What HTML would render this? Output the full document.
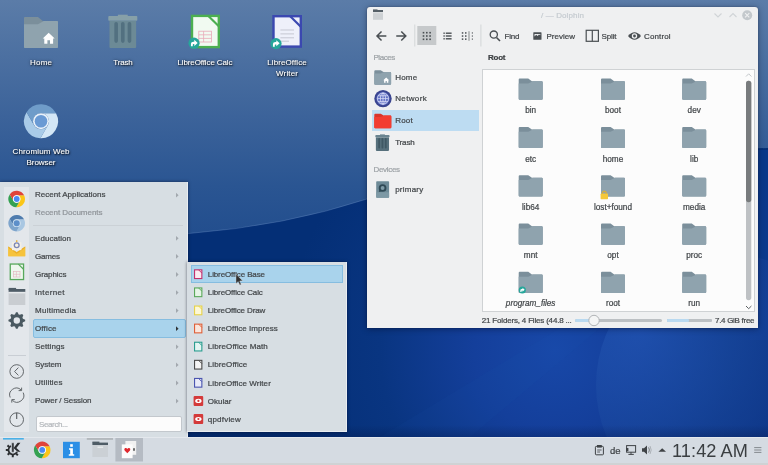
<!DOCTYPE html>
<html><head><meta charset="utf-8"><title>Desktop</title>
<style>
html,body{margin:0;padding:0;}
body{width:768px;height:465px;overflow:hidden;position:relative;font-family:"Liberation Sans",sans-serif;background:#0b2c7a;}
.t{position:absolute;white-space:nowrap;-webkit-text-stroke:0.22px currentColor;}
.dl{color:#fff;-webkit-text-stroke:0.1px #fff;text-shadow:0.8px 1px 1.6px rgba(0,0,0,.9),0 0 3px rgba(0,0,0,.55);}
#bg{position:absolute;left:0;top:0;}
#w{position:absolute;left:0;top:0;width:768px;height:465px;overflow:hidden;will-change:transform;filter:blur(0.35px);}
</style></head><body><div id="w">

<svg id="bg" width="768" height="465" viewBox="0 0 768 465">
<defs>
<linearGradient id="g1" x1="0" y1="0" x2="0" y2="1">
<stop offset="0" stop-color="#5b7ca8"/>
<stop offset="0.12" stop-color="#4c70a1"/>
<stop offset="0.25" stop-color="#3c639a"/>
<stop offset="0.40" stop-color="#2a5592"/>
<stop offset="0.55" stop-color="#1f4b8c"/>
<stop offset="0.75" stop-color="#163e86"/>
<stop offset="1" stop-color="#143382"/>
</linearGradient>
<radialGradient id="g2" cx="555" cy="350" r="270" gradientUnits="userSpaceOnUse">
<stop offset="0" stop-color="#1848a8"/>
<stop offset="0.3" stop-color="#143f9b"/>
<stop offset="0.65" stop-color="#093581"/>
<stop offset="1" stop-color="#042f76"/>
</radialGradient>
<radialGradient id="g3" cx="640" cy="330" r="190" gradientUnits="userSpaceOnUse">
<stop offset="0" stop-color="#2356b4"/>
<stop offset="0.5" stop-color="#1a48a0"/>
<stop offset="1" stop-color="#10368a"/>
</radialGradient>
<linearGradient id="g4" x1="0" y1="0" x2="0" y2="1">
<stop offset="0" stop-color="#000828" stop-opacity="0"/>
<stop offset="1" stop-color="#000828" stop-opacity="0.22"/>
</linearGradient>
</defs>
<rect width="768" height="465" fill="url(#g1)"/>
<path d="M0,248 Q60,240 189,233.5 Q285,226 367,199 Q600,152 768,148 V465 H0 Z" fill="url(#g2)"/>
<rect x="750" y="150" width="18" height="190" fill="#1446a8" opacity="0.4"/>
<path d="M0,248 Q60,240 189,233.5 Q285,226 367,199" fill="none" stroke="#8fb0e0" stroke-opacity="0.25" stroke-width="1"/>
<circle cx="727" cy="385" r="131" fill="url(#g3)" opacity="0.7"/>
<path d="M380,437 L560,328 L600,328 L470,437 Z" fill="#2a60c0" opacity="0.06"/>
<rect x="0" y="425" width="768" height="12" fill="url(#g4)"/>
</svg>

<svg style="position:absolute;left:0px;top:0px" width="768" height="180" viewBox="0 0 768 180"><path d="M25,17 H37.96 L42.835,20.875 H57 Q58,20.875 58,21.875 V47 Q58,48 57,48 H25 Q24,48 24,47 V18 Q24,17 25,17 Z" fill="#7b8f9b"/><path d="M24,24.13 H37.96 L43.835,20.875 H57 Q58,20.875 58,21.875 V47 Q58,48 57,48 H25 Q24,48 24,47 Z" fill="#8fa3ae"/><path d="M42.720000000000006,38.5 L48.7,32.78 L54.68,38.5 H53.120000000000005 V43.7 H50.0 V40.32 H47.400000000000006 V43.7 H44.28 V38.5 Z" fill="#fff"/><rect x="117.87" y="14.7" width="9.860000000000001" height="2.7888" fill="#87a0a8"/><rect x="108.3" y="16.0944" width="29" height="4.648000000000001" rx="0.8" fill="#87a0a8"/><path d="M109.46,20.7424 H136.14 V46.900000000000006 Q136.14,47.900000000000006 135.14,47.900000000000006 H110.46 Q109.46,47.900000000000006 109.46,46.900000000000006 Z" fill="#6c8a96"/><rect x="114.3175" y="22.003999999999998" width="3.625" height="20.916" rx="1.8125" fill="#527080"/><rect x="120.9875" y="22.003999999999998" width="3.625" height="20.916" rx="1.8125" fill="#527080"/><rect x="127.6575" y="22.003999999999998" width="3.625" height="20.916" rx="1.8125" fill="#527080"/><rect x="190.8" y="14.7" width="29.2" height="33.6" fill="#4caf50"/><rect x="193.20000000000002" y="17.099999999999998" width="24.4" height="28.8" fill="#f1faf1"/><path d="M208.392,15.899999999999999 L218.8,26.308" stroke="#4caf50" stroke-width="2.16"/><g stroke="#e9a9b8" stroke-width="0.8" fill="none"><rect x="198.8" y="31.2" width="12.6" height="10.8"/><path d="M198.8,34.8 H211.4 M198.8,38.4 H211.4 M203.6,31.2 V42"/></g><circle cx="194" cy="43.2" r="5.6" fill="#26a69a"/><path d="M190.94545454545454,46.25454545454546 V43.70909090909091 Q190.94545454545454,41.67272727272728 193.4909090909091,41.67272727272728 H194.30545454545455 V39.84 L197.66545454545454,42.89454545454546 L194.30545454545455,45.94909090909091 V44.014545454545456 H193.4909090909091 Q192.77818181818182,44.014545454545456 192.77818181818182,44.72727272727273 V46.25454545454546 Z" fill="#fff"/><rect x="272.3" y="15" width="29.7" height="32.8" fill="#3b48b0"/><rect x="274.7" y="17.4" width="24.9" height="27.999999999999996" fill="#eef0fa"/><path d="M290.222,16.2 L300.8,26.778" stroke="#3b48b0" stroke-width="2.16"/><g stroke="#c5c7d2" stroke-width="1"><path d="M280.4,30 H294 M280.4,33.9 H294 M280.4,37.8 H294 M280.4,41.2 H289"/></g><circle cx="276" cy="43.6" r="5.6" fill="#26a69a"/><path d="M272.94545454545454,46.654545454545456 V44.10909090909091 Q272.94545454545454,42.07272727272728 275.4909090909091,42.07272727272728 H276.30545454545455 V40.24 L279.66545454545457,43.29454545454546 L276.30545454545455,46.34909090909091 V44.414545454545454 H275.4909090909091 Q274.7781818181818,44.414545454545454 274.7781818181818,45.127272727272725 V46.654545454545456 Z" fill="#fff"/><path d="M41.00,113.21 L56.01,113.21 A17,17 0 0 1 40.42,138.19 L47.92,125.20 A7.99,7.99 0 0 0 41.00,113.21 Z" fill="#d4e7f6"/><path d="M47.92,125.20 L40.42,138.19 A17,17 0 0 1 26.58,112.20 L34.08,125.20 A7.99,7.99 0 0 0 47.92,125.20 Z" fill="#a9cbe8"/><path d="M34.08,125.20 L26.58,112.20 A17,17 0 0 1 56.01,113.21 L41.00,113.21 A7.99,7.99 0 0 0 34.08,125.20 Z" fill="#6f9cc9"/><circle cx="41" cy="121.2" r="7.99" fill="#e8f1fa"/><circle cx="41" cy="121.2" r="6.29" fill="#6a9ad4"/></svg>
<div class="t dl" style="left:30.00px;top:56.70px;font-size:8.0px;line-height:12px;color:#fff;letter-spacing:0.220px;">Home</div>
<div class="t dl" style="left:113.25px;top:56.70px;font-size:8.0px;line-height:12px;color:#fff;letter-spacing:-0.163px;">Trash</div>
<div class="t dl" style="left:177.50px;top:56.70px;font-size:8.0px;line-height:12px;color:#fff;letter-spacing:-0.118px;">LibreOffice Calc</div>
<div class="t dl" style="left:267.25px;top:56.70px;font-size:8.0px;line-height:12px;color:#fff;letter-spacing:0.096px;">LibreOffice</div>
<div class="t dl" style="left:276.00px;top:67.70px;font-size:8.0px;line-height:12px;color:#fff;letter-spacing:0.163px;">Writer</div>
<div class="t dl" style="left:12.50px;top:145.70px;font-size:8.0px;line-height:12px;color:#fff;letter-spacing:0.144px;">Chromium Web</div>
<div class="t dl" style="left:26.50px;top:157.20px;font-size:8.0px;line-height:12px;color:#fff;letter-spacing:-0.056px;">Browser</div>
<div style="position:absolute;left:367px;top:7px;width:391px;height:321px;background:#eff0f1;border-radius:3px 3px 0 0;box-shadow:0 1px 6px rgba(0,0,20,.38),0 0 1.5px rgba(0,0,20,.35);"></div>
<svg style="position:absolute;left:372px;top:9px" width="12" height="12" viewBox="0 0 12 12"><rect x="1" y="3" width="10" height="7.8" fill="#cdd1d4"/><rect x="1" y="1" width="10" height="2.2" fill="#566068"/><rect x="1" y="0.4" width="4.5" height="1.5" fill="#566068"/><rect x="1" y="3.2" width="10" height="1" fill="#e4e7e9"/></svg>
<div class="t " style="left:541.00px;top:9.70px;font-size:8.0px;line-height:12px;color:#c6ccd1;letter-spacing:0.120px;">/ — Dolphin</div>
<svg style="position:absolute;left:710px;top:8px" width="46" height="15" viewBox="0 0 46 15"><path d="M4.5,5.5 L8,9 L11.5,5.5" stroke="#d0d4d7" stroke-width="1.1" fill="none"/><path d="M19.5,9 L23,5.5 L26.5,9" stroke="#d0d4d7" stroke-width="1.1" fill="none"/><circle cx="37.2" cy="7.2" r="5" fill="#c3c8cc"/><path d="M35.1,5.1 L39.3,9.3 M39.3,5.1 L35.1,9.3" stroke="#eff0f1" stroke-width="1.1"/></svg>
<svg style="position:absolute;left:0px;top:0px" width="768" height="60" viewBox="0 0 768 60"><g stroke="#4a4f53" stroke-width="1.5" fill="none" stroke-linecap="square"><path d="M377.2,36 H385.6 M381,32 L377,36 L381,40"/><path d="M397,36 H405.6 M401.8,32 L405.8,36 L401.8,40"/></g><rect x="414.3" y="24.5" width="1" height="22" fill="#d3d6d8"/><rect x="480.4" y="24.5" width="1" height="22" fill="#d3d6d8"/><rect x="417.3" y="26" width="19" height="19" fill="#c6c9cb"/><rect x="422.70" y="31.90" width="1.6" height="1.6" fill="#4a4f53"/><rect x="422.70" y="35.20" width="1.6" height="1.6" fill="#4a4f53"/><rect x="422.70" y="38.50" width="1.6" height="1.6" fill="#4a4f53"/><rect x="426.00" y="31.90" width="1.6" height="1.6" fill="#4a4f53"/><rect x="426.00" y="35.20" width="1.6" height="1.6" fill="#4a4f53"/><rect x="426.00" y="38.50" width="1.6" height="1.6" fill="#4a4f53"/><rect x="429.30" y="31.90" width="1.6" height="1.6" fill="#4a4f53"/><rect x="429.30" y="35.20" width="1.6" height="1.6" fill="#4a4f53"/><rect x="429.30" y="38.50" width="1.6" height="1.6" fill="#4a4f53"/><rect x="443.4" y="32.50" width="1.4" height="1.4" fill="#4a4f53"/><rect x="445.8" y="32.50" width="5.8" height="1.4" fill="#4a4f53"/><rect x="443.4" y="35.30" width="1.4" height="1.4" fill="#4a4f53"/><rect x="445.8" y="35.30" width="5.8" height="1.4" fill="#4a4f53"/><rect x="443.4" y="38.10" width="1.4" height="1.4" fill="#4a4f53"/><rect x="445.8" y="38.10" width="5.8" height="1.4" fill="#4a4f53"/><rect x="461.8" y="32.20" width="1.5" height="1.5" fill="#4a4f53"/><rect x="465" y="32.20" width="1.5" height="1.5" fill="#4a4f53"/><rect x="471.8" y="32.20" width="1.2" height="1.5" fill="#4a4f53" opacity=".7"/><rect x="461.8" y="35.30" width="1.5" height="1.5" fill="#4a4f53"/><rect x="465" y="35.30" width="1.5" height="1.5" fill="#4a4f53"/><rect x="471.8" y="35.30" width="1.2" height="1.5" fill="#4a4f53" opacity=".7"/><rect x="461.8" y="38.40" width="1.5" height="1.5" fill="#4a4f53"/><rect x="465" y="38.40" width="1.5" height="1.5" fill="#4a4f53"/><rect x="471.8" y="38.40" width="1.2" height="1.5" fill="#4a4f53" opacity=".7"/><rect x="468.6" y="31.2" width="0.8" height="9.6" fill="#4a4f53" opacity=".8"/><circle cx="493.8" cy="34.6" r="3.6" stroke="#4a4f53" stroke-width="1.3" fill="none"/><path d="M496.5,37.4 L500,41" stroke="#4a4f53" stroke-width="1.5"/><rect x="533.3" y="32.2" width="8.2" height="7.6" rx="0.6" fill="#4a4f53"/><path d="M534.5,34 H540.3 V35.2 L539,34.6 L537.6,36 L536.2,34.8 L534.5,36.4 Z" fill="#eff0f1"/><rect x="586.2" y="30.3" width="12.2" height="11" stroke="#4a4f53" stroke-width="1.2" fill="none"/><path d="M592.3,30.3 V41.3" stroke="#4a4f53" stroke-width="1.2"/><path d="M628,36 Q634.5,28.5 641,36 Q634.5,43.5 628,36 Z" fill="#4a4f53"/><circle cx="634.5" cy="36" r="2.7" fill="#eff0f1"/><circle cx="634.5" cy="36" r="1.4" fill="#4a4f53"/></svg>
<div class="t " style="left:504.50px;top:30.70px;font-size:8.0px;line-height:12px;color:#43474a;letter-spacing:-0.187px;">Find</div>
<div class="t " style="left:546.50px;top:30.70px;font-size:8.0px;line-height:12px;color:#43474a;letter-spacing:0.008px;">Preview</div>
<div class="t " style="left:601.50px;top:30.70px;font-size:8.0px;line-height:12px;color:#43474a;letter-spacing:-0.141px;">Split</div>
<div class="t " style="left:644.00px;top:30.70px;font-size:8.0px;line-height:12px;color:#43474a;letter-spacing:0.135px;">Control</div>
<div class="t " style="left:373.50px;top:52.30px;font-size:8.0px;line-height:12px;color:#9ea3a7;letter-spacing:-0.462px;">Places</div>
<div class="t " style="left:373.50px;top:164.30px;font-size:8.0px;line-height:12px;color:#9ea3a7;letter-spacing:-0.325px;">Devices</div>
<div class="t " style="left:488.00px;top:52.30px;font-size:8.0px;line-height:12px;color:#3d4144;letter-spacing:-0.238px;font-weight:bold;">Root</div>
<div style="position:absolute;left:371.5px;top:110px;width:107px;height:21px;background:#bddcf2;"></div>
<svg style="position:absolute;left:0px;top:0px" width="768" height="210" viewBox="0 0 768 210"><path d="M375.3,70.2 H380.692 L383.5045,72.0125 H390.1 Q391.1,72.0125 391.1,73.0125 V83.7 Q391.1,84.7 390.1,84.7 H375.3 Q374.3,84.7 374.3,83.7 V71.2 Q374.3,70.2 375.3,70.2 Z" fill="#7b8f9b"/><path d="M374.3,73.535 H380.692 L384.5045,72.0125 H390.1 Q391.1,72.0125 391.1,73.0125 V83.7 Q391.1,84.7 390.1,84.7 H375.3 Q374.3,84.7 374.3,83.7 Z" fill="#8fa3ae"/><path d="M383.325,80.2 L386.2,77.45 L389.075,80.2 H388.325 V82.7 H386.825 V81.075 H385.575 V82.7 H384.075 V80.2 Z" fill="#fff"/><circle cx="383" cy="98.6" r="8.7" fill="#3a4590"/><circle cx="383" cy="98.6" r="6.6" fill="#5f6fc4"/><g stroke="#e6e9fa" stroke-width="0.7" fill="none"><circle cx="383" cy="98.6" r="5.6"/><ellipse cx="383" cy="98.6" rx="2.6" ry="5.6"/><path d="M377.4,98.6 H388.6 M383,93 V104.2 M378.2,95.8 H387.8 M378.2,101.4 H387.8"/></g><path d="M375.3,113.7 H380.78000000000003 L383.59250000000003,115.5125 H390.3 Q391.3,115.5125 391.3,116.5125 V127.19999999999999 Q391.3,128.2 390.3,128.2 H375.3 Q374.3,128.2 374.3,127.19999999999999 V114.7 Q374.3,113.7 375.3,113.7 Z" fill="#d9352b"/><path d="M374.3,117.035 H380.78000000000003 L384.59250000000003,115.5125 H390.3 Q391.3,115.5125 391.3,116.5125 V127.19999999999999 Q391.3,128.2 390.3,128.2 H375.3 Q374.3,128.2 374.3,127.19999999999999 Z" fill="#f23c31"/><rect x="380.019" y="134.4" width="4.862000000000001" height="1.3944" fill="#6a8490"/><rect x="375.3" y="135.09720000000002" width="14.3" height="2.3240000000000003" rx="0.8" fill="#6a8490"/><path d="M375.872,137.4212 H389.028 V150.0 Q389.028,151.0 388.028,151.0 H376.872 Q375.872,151.0 375.872,150.0 Z" fill="#56707c"/><rect x="378.26725" y="138.052" width="1.7875" height="10.458" rx="0.89375" fill="#3f5864"/><rect x="381.55625" y="138.052" width="1.7875" height="10.458" rx="0.89375" fill="#3f5864"/><rect x="384.84525" y="138.052" width="1.7875" height="10.458" rx="0.89375" fill="#3f5864"/><rect x="376.2" y="181.2" width="12.9" height="16.6" rx="0.8" fill="#6d8a97"/><rect x="376.2" y="192.3" width="12.9" height="5.5" rx="0.8" fill="#7d99a5"/><circle cx="382.6" cy="188" r="2.9" fill="#7f9ba7" stroke="#2f4955" stroke-width="1.9"/><path d="M379.6,189.5 L378.8,192 L381.6,191.3 Z" fill="#2f4955"/></svg>
<div class="t " style="left:395.20px;top:71.60px;font-size:8.0px;line-height:12px;color:#43474a;letter-spacing:0.220px;">Home</div>
<div class="t " style="left:395.20px;top:92.60px;font-size:8.0px;line-height:12px;color:#43474a;letter-spacing:0.360px;">Network</div>
<div class="t " style="left:395.20px;top:114.60px;font-size:8.0px;line-height:12px;color:#43474a;letter-spacing:0.201px;">Root</div>
<div class="t " style="left:395.20px;top:136.60px;font-size:8.0px;line-height:12px;color:#43474a;letter-spacing:-0.163px;">Trash</div>
<div class="t " style="left:395.20px;top:183.60px;font-size:8.0px;line-height:12px;color:#43474a;letter-spacing:0.222px;">primary</div>
<div style="position:absolute;left:482px;top:68.5px;width:272.5px;height:243.5px;background:#fcfcfc;border:1px solid #cfd2d4;box-sizing:border-box;"></div>
<div class="t " style="left:525.23px;top:104.60px;font-size:8.2px;line-height:12px;color:#43474a;">bin</div>
<div class="t " style="left:605.02px;top:104.60px;font-size:8.2px;line-height:12px;color:#43474a;">boot</div>
<div class="t " style="left:687.59px;top:104.60px;font-size:8.2px;line-height:12px;color:#43474a;">dev</div>
<div class="t " style="left:525.23px;top:153.60px;font-size:8.2px;line-height:12px;color:#43474a;">etc</div>
<div class="t " style="left:602.74px;top:153.60px;font-size:8.2px;line-height:12px;color:#43474a;">home</div>
<div class="t " style="left:690.10px;top:153.60px;font-size:8.2px;line-height:12px;color:#43474a;">lib</div>
<div class="t " style="left:522.04px;top:201.60px;font-size:8.2px;line-height:12px;color:#43474a;">lib64</div>
<div class="t " style="left:593.97px;top:201.60px;font-size:8.2px;line-height:12px;color:#43474a;">lost+found</div>
<div class="t " style="left:683.03px;top:201.60px;font-size:8.2px;line-height:12px;color:#43474a;">media</div>
<div class="t " style="left:523.87px;top:249.60px;font-size:8.2px;line-height:12px;color:#43474a;">mnt</div>
<div class="t " style="left:607.30px;top:249.60px;font-size:8.2px;line-height:12px;color:#43474a;">opt</div>
<div class="t " style="left:686.22px;top:249.60px;font-size:8.2px;line-height:12px;color:#43474a;">proc</div>
<div class="t " style="left:505.86px;top:297.60px;font-size:8.2px;line-height:12px;color:#43474a;font-style:italic;">program_files</div>
<div class="t " style="left:605.94px;top:297.60px;font-size:8.2px;line-height:12px;color:#43474a;">root</div>
<div class="t " style="left:688.27px;top:297.60px;font-size:8.2px;line-height:12px;color:#43474a;">run</div>
<svg style="position:absolute;left:0px;top:0px" width="768" height="330" viewBox="0 0 768 330"><path d="M519.7,78.6 H528.26 L531.91,81.25 H541.7 Q542.7,81.25 542.7,82.25 V98.8 Q542.7,99.8 541.7,99.8 H519.7 Q518.7,99.8 518.7,98.8 V79.6 Q518.7,78.6 519.7,78.6 Z" fill="#7b8f9b"/><path d="M518.7,83.476 H528.26 L532.91,81.25 H541.7 Q542.7,81.25 542.7,82.25 V98.8 Q542.7,99.8 541.7,99.8 H519.7 Q518.7,99.8 518.7,98.8 Z" fill="#8fa3ae"/><path d="M602,78.6 H610.56 L614.2099999999999,81.25 H624 Q625,81.25 625,82.25 V98.8 Q625,99.8 624,99.8 H602 Q601,99.8 601,98.8 V79.6 Q601,78.6 602,78.6 Z" fill="#7b8f9b"/><path d="M601,83.476 H610.56 L615.2099999999999,81.25 H624 Q625,81.25 625,82.25 V98.8 Q625,99.8 624,99.8 H602 Q601,99.8 601,98.8 Z" fill="#8fa3ae"/><path d="M683.2,78.6 H691.76 L695.41,81.25 H705.2 Q706.2,81.25 706.2,82.25 V98.8 Q706.2,99.8 705.2,99.8 H683.2 Q682.2,99.8 682.2,98.8 V79.6 Q682.2,78.6 683.2,78.6 Z" fill="#7b8f9b"/><path d="M682.2,83.476 H691.76 L696.41,81.25 H705.2 Q706.2,81.25 706.2,82.25 V98.8 Q706.2,99.8 705.2,99.8 H683.2 Q682.2,99.8 682.2,98.8 Z" fill="#8fa3ae"/><path d="M519.7,126.89999999999999 H528.26 L531.91,129.54999999999998 H541.7 Q542.7,129.54999999999998 542.7,130.54999999999998 V147.1 Q542.7,148.1 541.7,148.1 H519.7 Q518.7,148.1 518.7,147.1 V127.89999999999999 Q518.7,126.89999999999999 519.7,126.89999999999999 Z" fill="#7b8f9b"/><path d="M518.7,131.77599999999998 H528.26 L532.91,129.54999999999998 H541.7 Q542.7,129.54999999999998 542.7,130.54999999999998 V147.1 Q542.7,148.1 541.7,148.1 H519.7 Q518.7,148.1 518.7,147.1 Z" fill="#8fa3ae"/><path d="M602,126.89999999999999 H610.56 L614.2099999999999,129.54999999999998 H624 Q625,129.54999999999998 625,130.54999999999998 V147.1 Q625,148.1 624,148.1 H602 Q601,148.1 601,147.1 V127.89999999999999 Q601,126.89999999999999 602,126.89999999999999 Z" fill="#7b8f9b"/><path d="M601,131.77599999999998 H610.56 L615.2099999999999,129.54999999999998 H624 Q625,129.54999999999998 625,130.54999999999998 V147.1 Q625,148.1 624,148.1 H602 Q601,148.1 601,147.1 Z" fill="#8fa3ae"/><path d="M683.2,126.89999999999999 H691.76 L695.41,129.54999999999998 H705.2 Q706.2,129.54999999999998 706.2,130.54999999999998 V147.1 Q706.2,148.1 705.2,148.1 H683.2 Q682.2,148.1 682.2,147.1 V127.89999999999999 Q682.2,126.89999999999999 683.2,126.89999999999999 Z" fill="#7b8f9b"/><path d="M682.2,131.77599999999998 H691.76 L696.41,129.54999999999998 H705.2 Q706.2,129.54999999999998 706.2,130.54999999999998 V147.1 Q706.2,148.1 705.2,148.1 H683.2 Q682.2,148.1 682.2,147.1 Z" fill="#8fa3ae"/><path d="M519.7,175.2 H528.26 L531.91,177.85 H541.7 Q542.7,177.85 542.7,178.85 V195.39999999999998 Q542.7,196.39999999999998 541.7,196.39999999999998 H519.7 Q518.7,196.39999999999998 518.7,195.39999999999998 V176.2 Q518.7,175.2 519.7,175.2 Z" fill="#7b8f9b"/><path d="M518.7,180.076 H528.26 L532.91,177.85 H541.7 Q542.7,177.85 542.7,178.85 V195.39999999999998 Q542.7,196.39999999999998 541.7,196.39999999999998 H519.7 Q518.7,196.39999999999998 518.7,195.39999999999998 Z" fill="#8fa3ae"/><path d="M602,175.2 H610.56 L614.2099999999999,177.85 H624 Q625,177.85 625,178.85 V195.39999999999998 Q625,196.39999999999998 624,196.39999999999998 H602 Q601,196.39999999999998 601,195.39999999999998 V176.2 Q601,175.2 602,175.2 Z" fill="#7b8f9b"/><path d="M601,180.076 H610.56 L615.2099999999999,177.85 H624 Q625,177.85 625,178.85 V195.39999999999998 Q625,196.39999999999998 624,196.39999999999998 H602 Q601,196.39999999999998 601,195.39999999999998 Z" fill="#8fa3ae"/><path d="M683.2,175.2 H691.76 L695.41,177.85 H705.2 Q706.2,177.85 706.2,178.85 V195.39999999999998 Q706.2,196.39999999999998 705.2,196.39999999999998 H683.2 Q682.2,196.39999999999998 682.2,195.39999999999998 V176.2 Q682.2,175.2 683.2,175.2 Z" fill="#7b8f9b"/><path d="M682.2,180.076 H691.76 L696.41,177.85 H705.2 Q706.2,177.85 706.2,178.85 V195.39999999999998 Q706.2,196.39999999999998 705.2,196.39999999999998 H683.2 Q682.2,196.39999999999998 682.2,195.39999999999998 Z" fill="#8fa3ae"/><path d="M519.7,223.49999999999997 H528.26 L531.91,226.14999999999998 H541.7 Q542.7,226.14999999999998 542.7,227.14999999999998 V243.69999999999996 Q542.7,244.69999999999996 541.7,244.69999999999996 H519.7 Q518.7,244.69999999999996 518.7,243.69999999999996 V224.49999999999997 Q518.7,223.49999999999997 519.7,223.49999999999997 Z" fill="#7b8f9b"/><path d="M518.7,228.37599999999998 H528.26 L532.91,226.14999999999998 H541.7 Q542.7,226.14999999999998 542.7,227.14999999999998 V243.69999999999996 Q542.7,244.69999999999996 541.7,244.69999999999996 H519.7 Q518.7,244.69999999999996 518.7,243.69999999999996 Z" fill="#8fa3ae"/><path d="M602,223.49999999999997 H610.56 L614.2099999999999,226.14999999999998 H624 Q625,226.14999999999998 625,227.14999999999998 V243.69999999999996 Q625,244.69999999999996 624,244.69999999999996 H602 Q601,244.69999999999996 601,243.69999999999996 V224.49999999999997 Q601,223.49999999999997 602,223.49999999999997 Z" fill="#7b8f9b"/><path d="M601,228.37599999999998 H610.56 L615.2099999999999,226.14999999999998 H624 Q625,226.14999999999998 625,227.14999999999998 V243.69999999999996 Q625,244.69999999999996 624,244.69999999999996 H602 Q601,244.69999999999996 601,243.69999999999996 Z" fill="#8fa3ae"/><path d="M683.2,223.49999999999997 H691.76 L695.41,226.14999999999998 H705.2 Q706.2,226.14999999999998 706.2,227.14999999999998 V243.69999999999996 Q706.2,244.69999999999996 705.2,244.69999999999996 H683.2 Q682.2,244.69999999999996 682.2,243.69999999999996 V224.49999999999997 Q682.2,223.49999999999997 683.2,223.49999999999997 Z" fill="#7b8f9b"/><path d="M682.2,228.37599999999998 H691.76 L696.41,226.14999999999998 H705.2 Q706.2,226.14999999999998 706.2,227.14999999999998 V243.69999999999996 Q706.2,244.69999999999996 705.2,244.69999999999996 H683.2 Q682.2,244.69999999999996 682.2,243.69999999999996 Z" fill="#8fa3ae"/><path d="M519.7,271.79999999999995 H528.26 L531.91,274.44999999999993 H541.7 Q542.7,274.44999999999993 542.7,275.44999999999993 V291.99999999999994 Q542.7,292.99999999999994 541.7,292.99999999999994 H519.7 Q518.7,292.99999999999994 518.7,291.99999999999994 V272.79999999999995 Q518.7,271.79999999999995 519.7,271.79999999999995 Z" fill="#7b8f9b"/><path d="M518.7,276.67599999999993 H528.26 L532.91,274.44999999999993 H541.7 Q542.7,274.44999999999993 542.7,275.44999999999993 V291.99999999999994 Q542.7,292.99999999999994 541.7,292.99999999999994 H519.7 Q518.7,292.99999999999994 518.7,291.99999999999994 Z" fill="#8fa3ae"/><path d="M602,271.79999999999995 H610.56 L614.2099999999999,274.44999999999993 H624 Q625,274.44999999999993 625,275.44999999999993 V291.99999999999994 Q625,292.99999999999994 624,292.99999999999994 H602 Q601,292.99999999999994 601,291.99999999999994 V272.79999999999995 Q601,271.79999999999995 602,271.79999999999995 Z" fill="#7b8f9b"/><path d="M601,276.67599999999993 H610.56 L615.2099999999999,274.44999999999993 H624 Q625,274.44999999999993 625,275.44999999999993 V291.99999999999994 Q625,292.99999999999994 624,292.99999999999994 H602 Q601,292.99999999999994 601,291.99999999999994 Z" fill="#8fa3ae"/><path d="M683.2,271.79999999999995 H691.76 L695.41,274.44999999999993 H705.2 Q706.2,274.44999999999993 706.2,275.44999999999993 V291.99999999999994 Q706.2,292.99999999999994 705.2,292.99999999999994 H683.2 Q682.2,292.99999999999994 682.2,291.99999999999994 V272.79999999999995 Q682.2,271.79999999999995 683.2,271.79999999999995 Z" fill="#7b8f9b"/><path d="M682.2,276.67599999999993 H691.76 L696.41,274.44999999999993 H705.2 Q706.2,274.44999999999993 706.2,275.44999999999993 V291.99999999999994 Q706.2,292.99999999999994 705.2,292.99999999999994 H683.2 Q682.2,292.99999999999994 682.2,291.99999999999994 Z" fill="#8fa3ae"/><rect x="600.6" y="193.6" width="7.4" height="5.6" rx="0.6" fill="#f5c83a"/><path d="M602.4,193.79999999999998 V192.39999999999998 Q604.3,189.79999999999998 606.2,192.39999999999998 V193.79999999999998" stroke="#e0b030" stroke-width="1.1" fill="none"/><circle cx="522.3" cy="289.99999999999994" r="3.6" fill="#26a69a"/><path d="M520.3363636363636,291.9636363636363 V290.32727272727266 Q520.3363636363636,289.01818181818174 521.9727272727272,289.01818181818174 H522.4963636363636 V287.8399999999999 L524.6563636363636,289.8036363636363 L522.4963636363636,291.76727272727265 V290.5236363636363 H521.9727272727272 Q521.5145454545454,290.5236363636363 521.5145454545454,290.98181818181814 V291.9636363636363 Z" fill="#fff"/><rect x="746" y="80.8" width="5.3" height="219.4" rx="2.6" fill="#bec1c4"/><rect x="746" y="80.8" width="5.3" height="121.4" rx="2.6" fill="#787b7d"/><path d="M746,76.5 L748.7,73.8 L751.4,76.5" stroke="#c3c7ca" stroke-width="1" fill="none"/><path d="M746,306 L748.7,308.7 L751.4,306" stroke="#5b5f62" stroke-width="1" fill="none"/><rect x="575" y="319" width="87" height="3" rx="1.5" fill="#bcc0c3"/><rect x="575" y="319" width="19" height="3" rx="1.5" fill="#b9d9f0"/><circle cx="594" cy="320.5" r="5.2" fill="#f4f5f5" stroke="#a9adb0" stroke-width="0.9"/><rect x="667" y="319" width="45" height="3" rx="1" fill="#bcc0c3"/><rect x="667" y="319" width="22" height="3" rx="1" fill="#b9d9f0"/></svg>
<div class="t " style="left:481.80px;top:315.20px;font-size:8.0px;line-height:12px;color:#43474a;letter-spacing:-0.184px;">21 Folders, 4 Files (44.8 ...</div>
<div class="t " style="left:715.00px;top:315.20px;font-size:8.0px;line-height:12px;color:#43474a;letter-spacing:-0.290px;">7.4 GiB free</div>
<div style="position:absolute;left:0px;top:181.8px;width:188.4px;height:255px;background:#d7dee3;box-shadow:0 0 3px rgba(0,0,20,.55);border-right:1px solid #e9edf1;box-sizing:border-box;"></div>
<div style="position:absolute;left:4.4px;top:186.5px;width:24.2px;height:245px;background:#e3e7eb;"></div>
<div style="position:absolute;left:33px;top:224.8px;width:150px;height:1px;background:#cbd1d6;"></div>
<div style="position:absolute;left:8px;top:354.5px;width:18px;height:1px;background:#c9ced4;"></div>
<div style="position:absolute;left:32.5px;top:319px;width:153px;height:19.2px;background:#a9d3ec;border:1px solid #86bde0;box-sizing:border-box;border-radius:2px;"></div>
<div class="t " style="left:35.00px;top:188.60px;font-size:8.0px;line-height:12px;color:#43474a;letter-spacing:0.013px;">Recent Applications</div>
<div class="t " style="left:35.00px;top:206.60px;font-size:8.0px;line-height:12px;color:#90959a;letter-spacing:-0.035px;">Recent Documents</div>
<div class="t " style="left:35.00px;top:232.60px;font-size:8.0px;line-height:12px;color:#43474a;letter-spacing:0.053px;">Education</div>
<div class="t " style="left:35.00px;top:250.60px;font-size:8.0px;line-height:12px;color:#43474a;letter-spacing:-0.196px;">Games</div>
<div class="t " style="left:35.00px;top:268.60px;font-size:8.0px;line-height:12px;color:#43474a;letter-spacing:-0.073px;">Graphics</div>
<div class="t " style="left:35.00px;top:286.60px;font-size:8.0px;line-height:12px;color:#43474a;letter-spacing:0.339px;">Internet</div>
<div class="t " style="left:35.00px;top:304.60px;font-size:8.0px;line-height:12px;color:#43474a;letter-spacing:0.258px;">Multimedia</div>
<div class="t " style="left:35.00px;top:322.60px;font-size:8.0px;line-height:12px;color:#43474a;letter-spacing:0.150px;">Office</div>
<div class="t " style="left:35.00px;top:340.60px;font-size:8.0px;line-height:12px;color:#43474a;letter-spacing:0.085px;">Settings</div>
<div class="t " style="left:35.00px;top:358.60px;font-size:8.0px;line-height:12px;color:#43474a;letter-spacing:-0.034px;">System</div>
<div class="t " style="left:35.00px;top:376.60px;font-size:8.0px;line-height:12px;color:#43474a;letter-spacing:0.215px;">Utilities</div>
<div class="t " style="left:35.00px;top:394.60px;font-size:8.0px;line-height:12px;color:#43474a;letter-spacing:-0.093px;">Power / Session</div>
<div style="position:absolute;left:35.5px;top:416px;width:146px;height:15.5px;background:#fcfcfc;border:1px solid #c3c8cd;box-sizing:border-box;border-radius:2px;"></div>
<div class="t " style="left:39.00px;top:418.70px;font-size:8.0px;line-height:12px;color:#b4b8bc;letter-spacing:-0.377px;">Search...</div>
<svg style="position:absolute;left:0px;top:0px" width="768" height="436" viewBox="0 0 768 436"><path d="M176,192.79999999999998 L178.6,195.2 L176,197.6 Z" fill="#a2a8ae"/><path d="M176,235.9 L178.6,238.3 L176,240.70000000000002 Z" fill="#a2a8ae"/><path d="M176,253.99999999999997 L178.6,256.4 L176,258.79999999999995 Z" fill="#a2a8ae"/><path d="M176,272.1 L178.6,274.5 L176,276.9 Z" fill="#a2a8ae"/><path d="M176,290.20000000000005 L178.6,292.6 L176,295.0 Z" fill="#a2a8ae"/><path d="M176,308.20000000000005 L178.6,310.6 L176,313.0 Z" fill="#a2a8ae"/><path d="M176,326.3 L178.6,328.7 L176,331.09999999999997 Z" fill="#2f3336"/><path d="M176,344.40000000000003 L178.6,346.8 L176,349.2 Z" fill="#a2a8ae"/><path d="M176,362.5 L178.6,364.9 L176,367.29999999999995 Z" fill="#a2a8ae"/><path d="M176,380.6 L178.6,383 L176,385.4 Z" fill="#a2a8ae"/><path d="M176,398.70000000000005 L178.6,401.1 L176,403.5 Z" fill="#a2a8ae"/><path d="M16.70,195.26 L24.11,195.26 A8.3,8.3 0 0 1 16.23,207.29 L19.93,200.87 A3.74,3.74 0 0 0 16.70,195.26 Z" fill="#fbc618"/><path d="M19.93,200.87 L16.23,207.29 A8.3,8.3 0 0 1 9.76,194.45 L13.47,200.87 A3.74,3.74 0 0 0 19.93,200.87 Z" fill="#34a152"/><path d="M13.47,200.87 L9.76,194.45 A8.3,8.3 0 0 1 24.11,195.26 L16.70,195.26 A3.74,3.74 0 0 0 13.47,200.87 Z" fill="#e0443a"/><circle cx="16.7" cy="199" r="3.74" fill="#fff"/><circle cx="16.7" cy="199" r="2.91" fill="#4a8af4"/><path d="M16.70,219.30 L24.03,219.30 A8.3,8.3 0 0 1 16.42,231.50 L20.08,225.15 A3.90,3.90 0 0 0 16.70,219.30 Z" fill="#a9c7e2"/><path d="M20.08,225.15 L16.42,231.50 A8.3,8.3 0 0 1 9.66,218.81 L13.32,225.15 A3.90,3.90 0 0 0 20.08,225.15 Z" fill="#7ea5cc"/><path d="M13.32,225.15 L9.66,218.81 A8.3,8.3 0 0 1 24.03,219.30 L16.70,219.30 A3.90,3.90 0 0 0 13.32,225.15 Z" fill="#4f7cae"/><circle cx="16.7" cy="223.2" r="3.90" fill="#c5daee"/><circle cx="16.7" cy="223.2" r="2.99" fill="#5d8fc9"/><path d="M8.3,246.5 L16.7,252 L25.2,246.5 V256.3 H8.3 Z" fill="#f6c33c"/><path d="M8.3,246.5 L16.7,252.6 L25.2,246.5 V248 L16.7,254 L8.3,248 Z" fill="#e9ae2a"/><rect x="12" y="242.2" width="9.4" height="8" fill="#f4f0e6"/><circle cx="16.7" cy="245.2" r="2.4" fill="none" stroke="#7b86b5" stroke-width="1.3"/><rect x="16" y="240.3" width="1.4" height="1.6" fill="#e9ae2a"/><path d="M8.3,248 L16.7,254 L25.2,248 V256.3 H8.3 Z" fill="#f6c33c"/><rect x="9.6" y="263.4" width="14.6" height="16.8" fill="#58a85c"/><rect x="10.9" y="264.7" width="12.0" height="14.200000000000001" fill="#eef7ee"/><path d="M18.325999999999997,264.04999999999995 L23.55,269.274" stroke="#58a85c" stroke-width="1.1700000000000002"/><g stroke="#e4b0bc" stroke-width="0.6" fill="none"><rect x="13.4" y="271.6" width="6.6" height="5.4"/><path d="M13.4,274.3 H20 M16.4,271.6 V277"/></g><rect x="8.6" y="291.5" width="16.7" height="13.5" fill="#c9cdd1"/><rect x="8.6" y="289" width="16.7" height="2.8" fill="#4f5d67"/><rect x="8.6" y="287.9" width="7.5" height="2" fill="#4f5d67"/><rect x="8.6" y="292" width="16.7" height="1.4" fill="#e6e9eb"/><path d="M25.16,319.68 L25.16,321.32 L22.92,322.36 L22.44,323.52 L23.29,325.83 L22.13,326.99 L19.82,326.14 L18.66,326.62 L17.62,328.86 L15.98,328.86 L14.94,326.62 L13.78,326.14 L11.47,326.99 L10.31,325.83 L11.16,323.52 L10.68,322.36 L8.44,321.32 L8.44,319.68 L10.68,318.64 L11.16,317.48 L10.31,315.17 L11.47,314.01 L13.78,314.86 L14.94,314.38 L15.98,312.14 L17.62,312.14 L18.66,314.38 L19.82,314.86 L22.13,314.01 L23.29,315.17 L22.44,317.48 L22.92,318.64 Z M20.0,320.5 A3.2,3.2 0 1 0 13.600000000000001,320.5 A3.2,3.2 0 1 0 20.0,320.5 Z" fill="#4a5961" fill-rule="evenodd"/><circle cx="16.7" cy="371.5" r="6.8" fill="none" stroke="#55595c" stroke-width="0.9"/><path d="M18.4,367.6 L14.6,371.5 L18.4,375.4" fill="none" stroke="#55595c" stroke-width="0.9"/><path d="M10.2,397.5 A6.8,6.8 0 0 1 21,389.8 M23.2,392.6 A6.8,6.8 0 0 1 12.4,400.4" fill="none" stroke="#55595c" stroke-width="0.9"/><path d="M21.6,387.6 V390.6 H18.6 M11.8,402.6 V399.6 H14.8" fill="none" stroke="#55595c" stroke-width="0.9"/><circle cx="16.7" cy="419.6" r="6.8" fill="none" stroke="#55595c" stroke-width="0.9"/><path d="M16.7,412.8 V419" stroke="#55595c" stroke-width="1.1"/></svg>
<div style="position:absolute;left:187.2px;top:261.5px;width:159.8px;height:170.1px;background:#d7dee3;box-shadow:0 0 3px rgba(0,0,20,.55);border-right:1px solid #e9edf1;border-bottom:1px solid #e9edf1;box-sizing:border-box;"></div>
<div style="position:absolute;left:191.2px;top:265.3px;width:152px;height:17.5px;background:#a9d3ec;border:1px solid #86bde0;box-sizing:border-box;"></div>
<div class="t " style="left:207.80px;top:268.60px;font-size:8.0px;line-height:12px;color:#43474a;letter-spacing:-0.119px;">LibreOffice Base</div>
<div class="t " style="left:207.80px;top:286.60px;font-size:8.0px;line-height:12px;color:#43474a;letter-spacing:-0.118px;">LibreOffice Calc</div>
<div class="t " style="left:207.80px;top:304.60px;font-size:8.0px;line-height:12px;color:#43474a;letter-spacing:-0.128px;">LibreOffice Draw</div>
<div class="t " style="left:207.80px;top:322.60px;font-size:8.0px;line-height:12px;color:#43474a;letter-spacing:0.044px;">LibreOffice Impress</div>
<div class="t " style="left:207.80px;top:340.60px;font-size:8.0px;line-height:12px;color:#43474a;letter-spacing:0.097px;">LibreOffice Math</div>
<div class="t " style="left:207.80px;top:358.60px;font-size:8.0px;line-height:12px;color:#43474a;letter-spacing:0.096px;">LibreOffice</div>
<div class="t " style="left:207.80px;top:377.60px;font-size:8.0px;line-height:12px;color:#43474a;letter-spacing:0.062px;">LibreOffice Writer</div>
<div class="t " style="left:207.80px;top:395.60px;font-size:8.0px;line-height:12px;color:#43474a;letter-spacing:-0.012px;">Okular</div>
<div class="t " style="left:207.80px;top:413.60px;font-size:8.0px;line-height:12px;color:#43474a;letter-spacing:0.204px;">qpdfview</div>
<svg style="position:absolute;left:0px;top:0px" width="768" height="436" viewBox="0 0 768 436"><rect x="194" y="269.3" width="8.4" height="9.8" fill="#c2306e"/><rect x="195.1" y="270.40000000000003" width="6.2" height="7.6000000000000005" fill="#fbe9f0"/><path d="M198.63,269.85 L201.85,273.07" stroke="#c2306e" stroke-width="0.9900000000000001"/><rect x="194" y="287.40000000000003" width="8.4" height="9.8" fill="#5aa85a"/><rect x="195.1" y="288.50000000000006" width="6.2" height="7.6000000000000005" fill="#e6f4e6"/><path d="M198.63,287.95000000000005 L201.85,291.17" stroke="#5aa85a" stroke-width="0.9900000000000001"/><rect x="194" y="305.5" width="8.4" height="9.8" fill="#e6d24a"/><rect x="195.1" y="306.6" width="6.2" height="7.6000000000000005" fill="#fdf8d6"/><path d="M198.63,306.05 L201.85,309.27" stroke="#e6d24a" stroke-width="0.9900000000000001"/><rect x="194" y="323.6" width="8.4" height="9.8" fill="#df5f38"/><rect x="195.1" y="324.70000000000005" width="6.2" height="7.6000000000000005" fill="#fbe6dc"/><path d="M198.63,324.15000000000003 L201.85,327.37" stroke="#df5f38" stroke-width="0.9900000000000001"/><rect x="194" y="341.70000000000005" width="8.4" height="9.8" fill="#2a9d8f"/><rect x="195.1" y="342.80000000000007" width="6.2" height="7.6000000000000005" fill="#e4f5f2"/><path d="M198.63,342.25000000000006 L201.85,345.47" stroke="#2a9d8f" stroke-width="0.9900000000000001"/><rect x="194" y="359.8" width="8.4" height="9.8" fill="#4a4a4a"/><rect x="195.1" y="360.90000000000003" width="6.2" height="7.6000000000000005" fill="#f4f4f4"/><path d="M198.63,360.35 L201.85,363.57" stroke="#4a4a4a" stroke-width="0.9900000000000001"/><rect x="194" y="377.90000000000003" width="8.4" height="9.8" fill="#4a55b0"/><rect x="195.1" y="379.00000000000006" width="6.2" height="7.6000000000000005" fill="#e8eaf8"/><path d="M198.63,378.45000000000005 L201.85,381.67" stroke="#4a55b0" stroke-width="0.9900000000000001"/><rect x="193.6" y="395.9" width="9.6" height="10" rx="1" fill="#d43a3a"/><ellipse cx="198.4" cy="400.9" rx="3.2" ry="2.1" fill="#fff"/><circle cx="198.4" cy="400.9" r="1.1" fill="#d43a3a"/><rect x="193.6" y="414.0" width="9.6" height="10" rx="1" fill="#d43a3a"/><ellipse cx="198.4" cy="419.0" rx="3.2" ry="2.1" fill="#fff"/><circle cx="198.4" cy="419.0" r="1.1" fill="#d43a3a"/><path d="M236,274.2 V283.6 L238.2,281.6 L239.8,285 L241.2,284.4 L239.7,281 L242.6,280.8 Z" fill="#303030" stroke="#d8d8d8" stroke-width="0.4"/></svg>
<div style="position:absolute;left:0px;top:436.6px;width:768px;height:28.4px;background:#d5dbe2;border-top:1px solid #e4e8ed;box-sizing:border-box;"></div>
<div style="position:absolute;left:0px;top:463px;width:768px;height:2px;background:#cfd2d4;"></div>
<svg style="position:absolute;left:0px;top:436px" width="768" height="29" viewBox="0 436 768 29"><rect x="3" y="438" width="20.8" height="1.6" fill="#4ab0e6"/><path d="M11.10,445.92 A4.5,4.5 0 1 0 17.08,451.90" fill="none" stroke="#2b2e31" stroke-width="1.7"/><path d="M9.32,446.91 L7.48,445.37" stroke="#2b2e31" stroke-width="2"/><path d="M8.20,450.00 L5.80,450.00" stroke="#2b2e31" stroke-width="2"/><path d="M9.43,453.21 L7.65,454.82" stroke="#2b2e31" stroke-width="2"/><path d="M12.83,454.80 L12.75,457.20" stroke="#2b2e31" stroke-width="2"/><path d="M16.21,453.57 L17.82,455.35" stroke="#2b2e31" stroke-width="2"/><path d="M11.7,442.8 H14 V452.2 H11.7 Z" fill="#2b2e31" stroke="#d5dbe2" stroke-width="0.5"/><path d="M14,447.6 L17.6,442.8 H20.4 L16.4,447.9 L20.6,451.8 H17.6 L14,448.6 Z" fill="#2b2e31"/><path d="M42.20,446.16 L49.61,446.16 A8.3,8.3 0 0 1 41.73,458.19 L45.43,451.77 A3.74,3.74 0 0 0 42.20,446.16 Z" fill="#fbc618"/><path d="M45.43,451.77 L41.73,458.19 A8.3,8.3 0 0 1 35.26,445.35 L38.97,451.77 A3.74,3.74 0 0 0 45.43,451.77 Z" fill="#34a152"/><path d="M38.97,451.77 L35.26,445.35 A8.3,8.3 0 0 1 49.61,446.16 L42.20,446.16 A3.74,3.74 0 0 0 38.97,451.77 Z" fill="#e0443a"/><circle cx="42.2" cy="449.9" r="3.74" fill="#fff"/><circle cx="42.2" cy="449.9" r="2.91" fill="#4a8af4"/><rect x="63" y="441.8" width="16.8" height="16.4" fill="#2b8fe6"/><rect x="70.2" y="444.2" width="2.6" height="2.6" fill="#fff"/><path d="M69,448.2 H72.9 V454.2 H74.2 V455.8 H68.8 V454.2 H70.2 V449.8 H69 Z" fill="#fff"/><rect x="86.8" y="438" width="26.2" height="1.9" fill="#b3b8bd"/><rect x="92.4" y="444.6" width="15.6" height="12.4" fill="#cbd0d5"/><rect x="92.4" y="442.6" width="15.6" height="2.4" fill="#4f5d67"/><rect x="92.4" y="441.6" width="7" height="1.6" fill="#4f5d67"/><rect x="97.5" y="446.6" width="5.6" height="1.2" fill="#eceff1"/><rect x="115.4" y="438" width="27.6" height="23.5" fill="#b5bbc3"/><rect x="125.4" y="441" width="10.8" height="13.8" fill="#f1f1f1"/><rect x="121.8" y="444.4" width="10.8" height="13.8" fill="#fcfcfc"/><path d="M127.3,453.2 L124.6,450.4 Q123.6,448.6 125.2,448 Q126.6,447.6 127.3,449 Q128,447.6 129.4,448 Q131,448.6 130,450.4 Z" fill="#e0282e"/><rect x="133.3" y="448" width="1.4" height="3" rx="0.7" fill="#333"/><rect x="595.4" y="446.4" width="8" height="8.4" rx="0.8" fill="none" stroke="#3f4346" stroke-width="1"/><rect x="597" y="445" width="4.8" height="2.6" fill="#3f4346"/><path d="M597.2,450 H601.6 M597.2,452 H600" stroke="#3f4346" stroke-width="0.8"/><rect x="626.6" y="445.6" width="9" height="6.6" fill="none" stroke="#3f4346" stroke-width="1"/><path d="M631,452.2 V454 M628.4,454.4 H633.8" stroke="#3f4346" stroke-width="1"/><rect x="626" y="448" width="2.4" height="3.2" fill="#3f4346"/><path d="M642,448.2 H644 L647,445.4 V454.6 L644,451.8 H642 Z" fill="#3f4346"/><path d="M648.6,447.4 Q650.2,450 648.6,452.6" stroke="#3f4346" stroke-width="0.9" fill="none" opacity=".7"/><path d="M650,446 Q652.4,450 650,454" stroke="#3f4346" stroke-width="0.8" fill="none" opacity=".35"/><path d="M658.4,451.8 L662.2,448.2 L666,451.8 Z" fill="#3f4346"/><path d="M754.2,447.6 H761.4 M754.2,450 H761.4 M754.2,452.4 H761.4" stroke="#7b8085" stroke-width="0.9"/></svg>
<div class="t " style="left:610.00px;top:444.90px;font-size:9.5px;line-height:12px;color:#3f4346;letter-spacing:0.034px;">de</div>
<div class="t " style="left:672.00px;top:441.00px;font-size:18.2px;line-height:20px;color:#3a3e41;letter-spacing:0.066px;-webkit-text-stroke:0;">11:42 AM</div>
</div></body></html>
